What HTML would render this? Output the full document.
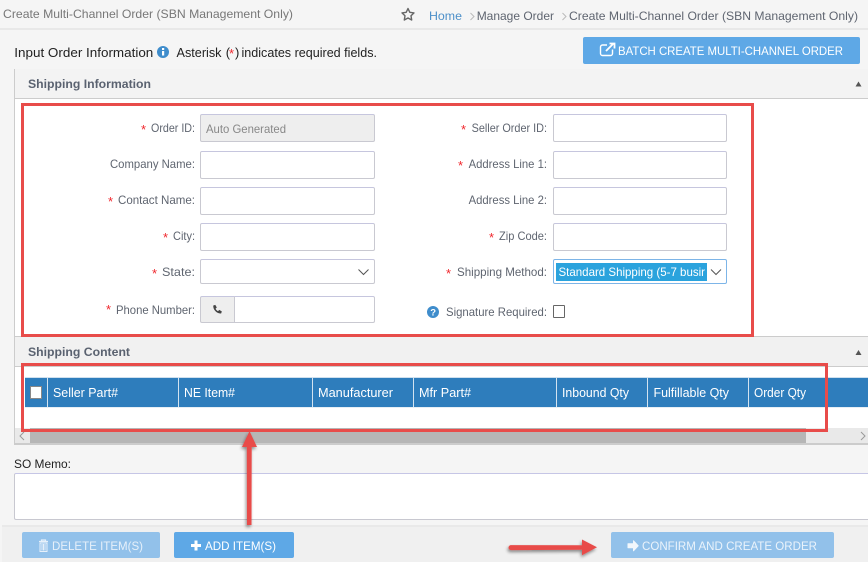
<!DOCTYPE html>
<html><head><meta charset="utf-8"><title>Create Multi-Channel Order</title>
<style>
html,body{margin:0;padding:0}
body{width:868px;height:562px;overflow:hidden;position:relative;background:#f5f5f5;font-family:"Liberation Sans",sans-serif}
.b{position:absolute;box-sizing:border-box}
.i{background:#fff;border:1px solid #c9c9d1;border-top-color:#c6c6de;border-radius:2px;width:175px;height:28px}
.btn{border-radius:2px;height:26px;top:532px}
.sep{position:absolute;top:377px;height:30px;width:1px;background:#d3e3f0}
svg{position:absolute;left:0;top:0}
text{font-family:"Liberation Sans",sans-serif;font-size:12px;fill:#5f6570}
.s{fill:#f0262c;font-size:13px}
.h{fill:#fff;font-size:12.5px}
.w{fill:#fff}
.d{fill:#222;font-size:13px}
</style></head><body>
<div class="b" style="left:0;top:28px;width:868px;height:2px;background:#e8e8e8"></div>
<div class="b" style="left:583px;top:37px;width:277px;height:27px;background:#5ea8e6;border-radius:2px"></div>
<div class="b" style="left:14px;top:69px;width:854px;height:376px;background:#fff;border-left:1px solid #ccc"></div>
<div class="b" style="left:15px;top:69px;width:853px;height:30px;background:#f3f3f3;border-bottom:1px solid #ccc"></div>
<div class="b" style="left:15px;top:336px;width:853px;height:31px;background:#f1f1f1;border-top:1px solid #ccc;border-bottom:1px solid #ccc"></div>

<div class="b i" style="left:200px;top:114px;background:#eee"></div>
<div class="b i" style="left:200px;top:151px"></div>
<div class="b i" style="left:200px;top:187px"></div>
<div class="b i" style="left:200px;top:223px"></div>
<div class="b i" style="left:200px;top:259px;height:25px"></div>
<div class="b i" style="left:200px;top:296px;width:35px;height:27px;background:#eee;border-radius:2px 0 0 2px"></div>
<div class="b i" style="left:234px;top:296px;width:141px;height:27px;border-radius:0 2px 2px 0"></div>
<div class="b i" style="left:553px;top:114px;width:174px"></div>
<div class="b i" style="left:553px;top:151px;width:174px"></div>
<div class="b i" style="left:553px;top:187px;width:174px"></div>
<div class="b i" style="left:553px;top:223px;width:174px"></div>
<div class="b i" style="left:553px;top:259px;width:174px;height:25px;border-color:#7db5e8"></div>
<div class="b" style="left:556px;top:263px;width:151px;height:18px;background:#2ba3dd"></div>
<div class="b" style="left:553px;top:305px;width:12px;height:13px;background:#fff;border:1px solid #666;border-radius:1px"></div>

<div class="b" style="left:25px;top:377px;width:843px;height:31px;background:#2e7dbc;border-top:1px solid #cfe0ee;border-bottom:1px solid #e6eef5"></div>
<div class="sep" style="left:47px"></div><div class="sep" style="left:178px"></div><div class="sep" style="left:312px"></div><div class="sep" style="left:413px"></div><div class="sep" style="left:556px"></div><div class="sep" style="left:647px"></div><div class="sep" style="left:748px"></div>
<div class="b" style="left:30px;top:386px;width:12px;height:13px;background:#fff;border:1px solid #888"></div>

<div class="b" style="left:15px;top:428px;width:853px;height:15px;background:#e9e9e9"></div>
<div class="b" style="left:30px;top:428px;width:776px;height:15px;background:#b6b6b6"></div>
<div class="b" style="left:15px;top:443px;width:853px;height:2px;background:#ccc"></div>

<div class="b" style="left:14px;top:473px;width:854px;height:47px;background:#fff;border:1px solid #c8c8d0;border-top-color:#c6c6e6;border-right:none;border-radius:2px 0 0 2px"></div>
<div class="b" style="left:2px;top:525px;width:866px;height:37px;background:#f0f0f0;border-top:2px solid #e9e9e9"></div>
<div class="b btn" style="left:22px;width:138px;background:#92c1ea"></div>
<div class="b btn" style="left:174px;width:120px;background:#5ea8e6"></div>
<div class="b btn" style="left:611px;width:223px;background:#92c1ea"></div>

<div class="b" style="left:21px;top:103px;width:733px;height:234px;border:3px solid #e84c4a"></div>
<div class="b" style="left:21px;top:363px;width:807px;height:69px;border:3px solid #e84c4a"></div>

<svg width="868" height="562" viewBox="0 0 868 562">
<defs><filter id="sh" x="-30%" y="-30%" width="160%" height="160%"><feGaussianBlur in="SourceAlpha" stdDeviation="1.5"/><feOffset dx="-1" dy="2"/><feComponentTransfer><feFuncA type="linear" slope=".45"/></feComponentTransfer><feMerge><feMergeNode/><feMergeNode in="SourceGraphic"/></feMerge></filter></defs>
<text x="3" y="18" textLength="290" lengthAdjust="spacingAndGlyphs" style="fill:#777">Create Multi-Channel Order (SBN Management Only)</text>
<path d="M408 8.500l1.800 3.800 4.200.6-3 2.900.7 4.200-3.700-2-3.700 2 .7-4.200-3-2.900 4.200-.6z" fill="none" stroke="#666" stroke-width="1.400" stroke-linejoin="round"/>
<text x="429" y="20" textLength="33" lengthAdjust="spacingAndGlyphs" style="fill:#4d90c9">Home</text>
<path d="M470.500 13l3.500 3.500-3.500 3.500M562.500 13l3.500 3.500-3.500 3.500" fill="none" stroke="#bbb" stroke-width="1"/>
<text x="476.700" y="20" textLength="77.300" lengthAdjust="spacingAndGlyphs">Manage Order</text>
<text x="569" y="20" textLength="289" lengthAdjust="spacingAndGlyphs">Create Multi-Channel Order (SBN Management Only)</text>

<text x="14.300" y="57" textLength="139" lengthAdjust="spacingAndGlyphs" class="d">Input Order Information</text>
<circle cx="163" cy="52" r="6" fill="#3f8dcc"/><rect x="162" y="51" width="2.200" height="4.500" fill="#fff"/><rect x="162" y="48" width="2.200" height="2" fill="#fff"/>
<text x="176.500" y="57" textLength="45" lengthAdjust="spacingAndGlyphs" class="d">Asterisk</text>
<text x="225.800" y="57" class="d">(</text><text x="229" y="58" class="s">*</text><text x="235" y="57" class="d">)</text>
<text x="241.500" y="57" textLength="135.500" lengthAdjust="spacingAndGlyphs" class="d">indicates required fields.</text>

<path d="M607 45h-4.500a2 2 0 0 0-2 2v6.500a2 2 0 0 0 2 2h8a2 2 0 0 0 2-2v-4" fill="none" stroke="#fff" stroke-width="1.400"/>
<path d="M606 51l7-7M609.500 43.500h5v5" fill="none" stroke="#fff" stroke-width="1.800"/>
<text x="618" y="55" textLength="225" lengthAdjust="spacingAndGlyphs" class="w">BATCH CREATE MULTI-CHANNEL ORDER</text>

<text x="28" y="88" textLength="123" lengthAdjust="spacingAndGlyphs" style="fill:#5a6270;font-weight:bold">Shipping Information</text>
<path d="M855.500 86.500l3-5 3 5z" fill="#555"/>
<text x="28" y="356" textLength="102" lengthAdjust="spacingAndGlyphs" style="fill:#5a6270;font-weight:bold">Shipping Content</text>
<path d="M855.500 355l3-5 3 5z" fill="#555"/>

<text x="141" y="134" class="s">*</text><text x="151" y="132" textLength="44" lengthAdjust="spacingAndGlyphs">Order ID:</text>
<text x="110" y="168" textLength="85" lengthAdjust="spacingAndGlyphs">Company Name:</text>
<text x="108" y="206" class="s">*</text><text x="118" y="204" textLength="77" lengthAdjust="spacingAndGlyphs">Contact Name:</text>
<text x="163" y="242" class="s">*</text><text x="173" y="240" textLength="22" lengthAdjust="spacingAndGlyphs">City:</text>
<text x="152" y="278" class="s">*</text><text x="162" y="276" textLength="33" lengthAdjust="spacingAndGlyphs">State:</text>
<text x="106" y="314" class="s">*</text><text x="116" y="314" textLength="79" lengthAdjust="spacingAndGlyphs">Phone Number:</text>

<text x="461" y="134" class="s">*</text><text x="471.600" y="132" textLength="75.400" lengthAdjust="spacingAndGlyphs">Seller Order ID:</text>
<text x="458" y="170" class="s">*</text><text x="468.600" y="168" textLength="78.400" lengthAdjust="spacingAndGlyphs">Address Line 1:</text>
<text x="468.600" y="204" textLength="78.400" lengthAdjust="spacingAndGlyphs">Address Line 2:</text>
<text x="489" y="242" class="s">*</text><text x="499" y="240" textLength="48" lengthAdjust="spacingAndGlyphs">Zip Code:</text>
<text x="446" y="278" class="s">*</text><text x="457" y="276" textLength="90" lengthAdjust="spacingAndGlyphs">Shipping Method:</text>
<circle cx="433" cy="312" r="6" fill="#3f8dcc"/><text x="430.200" y="315.500" style="fill:#fff;font-size:9.500px;font-weight:bold">?</text>
<text x="446" y="316" textLength="101" lengthAdjust="spacingAndGlyphs">Signature Required:</text>

<text x="206" y="133" textLength="80" lengthAdjust="spacingAndGlyphs" style="fill:#888">Auto Generated</text>
<text x="558.500" y="276" textLength="146.500" lengthAdjust="spacingAndGlyphs" class="w">Standard Shipping (5-7 busir</text>
<path d="M358.500 269.500l5 5 5-5M711 269.500l5 5 5-5" fill="none" stroke="#555" stroke-width="1"/>
<path d="M213.300 305.500l2-.6 1.500 2.600-1.200 1.100c.5 1.200 1.300 2 2.500 2.500l1.100-1.200 2.600 1.500-.6 2c-3.900.8-8.500-3.800-7.900-7.900z" fill="#444"/>

<text x="53" y="397" textLength="65" lengthAdjust="spacingAndGlyphs" class="h">Seller Part#</text>
<text x="184" y="397" textLength="51" lengthAdjust="spacingAndGlyphs" class="h">NE Item#</text>
<text x="318" y="397" textLength="75" lengthAdjust="spacingAndGlyphs" class="h">Manufacturer</text>
<text x="419" y="397" textLength="52" lengthAdjust="spacingAndGlyphs" class="h">Mfr Part#</text>
<text x="562" y="397" textLength="67" lengthAdjust="spacingAndGlyphs" class="h">Inbound Qty</text>
<text x="653.500" y="397" textLength="75.500" lengthAdjust="spacingAndGlyphs" class="h">Fulfillable Qty</text>
<text x="754" y="397" textLength="52" lengthAdjust="spacingAndGlyphs" class="h">Order Qty</text>

<path d="M24 432l-4 4 4 4M861 432l4 4-4 4" fill="none" stroke="#999" stroke-width="1"/>

<text x="14" y="468" textLength="57" lengthAdjust="spacingAndGlyphs" style="fill:#222">SO Memo:</text>

<path d="M39 541.500h9M41.500 541.500v-1.500h4v1.500" fill="none" stroke="#e6f0fa" stroke-width="1.200"/>
<path d="M40 543h7v8.500h-7zM42 544v6.500M43.500 544v6.500M45 544v6.500" fill="none" stroke="#e6f0fa" stroke-width="1"/>
<text x="52" y="550" textLength="91" lengthAdjust="spacingAndGlyphs" style="fill:#e6f0fa">DELETE ITEM(S)</text>
<path d="M191 545.500h10M196 540.500v10" stroke="#fff" stroke-width="3"/>
<text x="205" y="550" textLength="71" lengthAdjust="spacingAndGlyphs" class="w">ADD ITEM(S)</text>
<path d="M628 543.800h5.500v-3l4.700 5-4.700 5v-3H628z" fill="#f2f7fc" stroke="#f2f7fc" stroke-width="1" stroke-linejoin="round"/>
<text x="642" y="550" textLength="175" lengthAdjust="spacingAndGlyphs" style="fill:#eaf3fb">CONFIRM AND CREATE ORDER</text>

<g filter="url(#sh)" fill="#e84c4a">
<path d="M249.500 431l7.500 16h-5.300l-.2 78h-4.500l-.2-78H242z"/>
<path d="M597 547.300l-15 8v-5.500l-71 .3a2.500 2.500 0 0 1 0-5l71 .2v-5.800z"/>
</g>
</svg>
</body></html>
